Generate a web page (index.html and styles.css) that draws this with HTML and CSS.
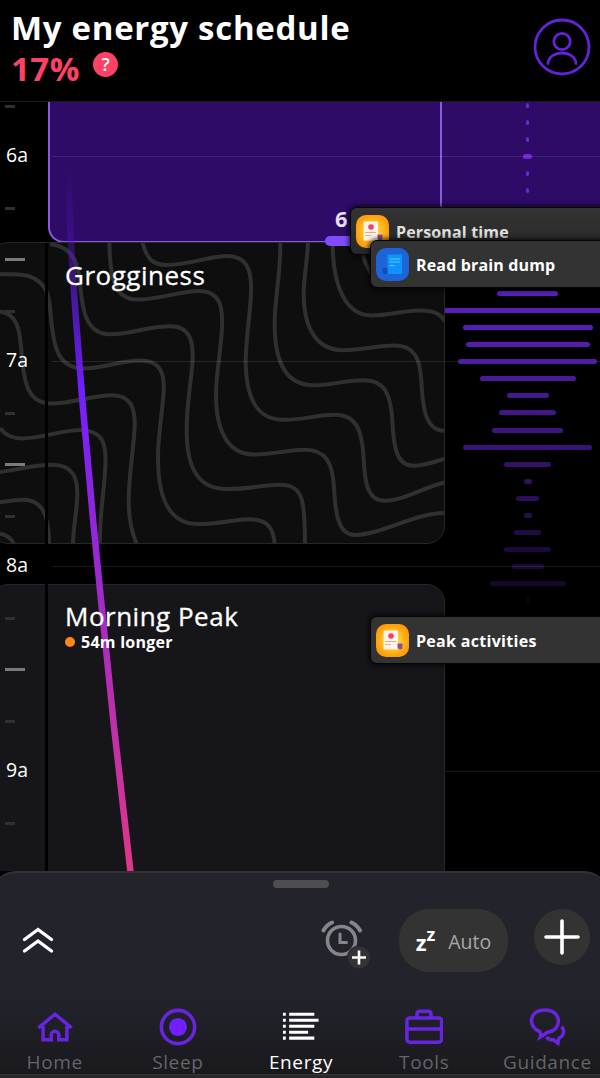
FILE: index.html
```
<!DOCTYPE html>
<html lang="en">
<head>
  <meta charset="utf-8">
  <title>My energy schedule</title>
  <link rel="stylesheet" href="styles.css">
</head>
<body>
  <header class="header">
    <div>
      <h1 class="title">My energy schedule</h1>
      <div class="energy">
        <span class="percent">17%</span>
        <span class="help">?</span>
      </div>
    </div>
    <svg class="profile" width="58" height="58" viewBox="0 0 58 58">
      <circle cx="29" cy="29" r="27"/>
      <circle cx="29" cy="23.5" r="8.2"/>
      <path d="M15 45.5C16 31.500 42 31.500 43 45.500"/>
    </svg>
  </header>

  <main class="schedule">
    <div class="blocks">
      <div class="block-sleep"><span class="wake-time">6</span><i class="wake-handle"></i></div>
      <div class="block block-groggy">
        <svg class="waves" viewBox="0 36 1335 904" preserveAspectRatio="none">
          <path d="M150 40C200 45 232 75 238 140C246 220 250 310 330 310C400 310 440 286 510 286C570 286 582 330 577 400C570 480 560 520 560 600C560 720 600 775 680 775C750 775 790 762 840 762C910 762 915 810 915 940"/>
          <path d="M0 130H40C110 130 145 160 150 230C158 330 165 413 250 413C310 413 360 389 420 389C480 389 494 425 491 480C488 540 474 610 474 680C474 810 510 880 595 880C660 880 700 866 750 866C800 866 820 890 824 940"/>
          <path d="M0 242C50 250 60 290 65 370C72 460 85 518 155 518C215 518 280 493 335 493C395 493 406 535 404 590C400 660 386 740 386 810C386 870 395 905 410 940"/>
          <path d="M0 592C15 612 35 623 65 623C130 623 180 598 240 598C310 598 320 640 316 710C312 790 298 850 300 940"/>
          <path d="M0 724C60 716 100 702 155 702C220 702 236 740 231 810C228 860 220 890 219 940"/>
          <path d="M0 815C25 811 45 807 70 807C125 807 147 850 147 940"/>
          <path d="M0 908C20 913 34 922 42 940"/>
          <path d="M328 36C330 130 340 206 410 206C480 206 540 180 595 180C660 180 669 225 666 290C662 370 647 430 648 500C650 610 690 671 760 671C830 671 860 657 915 657C980 657 998 700 1002 770C1006 850 1015 913 1065 913C1140 913 1250 845 1335 847"/>
          <path d="M428 36C440 80 455 102 500 102C570 102 630 75 680 75C740 75 756 115 753 185C750 265 736 330 737 400C740 510 775 567 850 567C915 567 950 552 1005 552C1070 552 1085 600 1090 670C1094 740 1095 810 1155 810C1210 810 1270 770 1335 755"/>
          <path d="M841 36C842 130 824 200 824 280C824 400 860 463 940 463C1000 463 1035 448 1090 448C1155 448 1172 490 1177 570C1181 650 1190 705 1240 705C1275 705 1300 693 1335 684"/>
          <path d="M924 36C922 90 911 140 911 190C912 300 955 358 1030 358C1090 358 1130 344 1185 344C1245 344 1260 385 1264 450C1268 530 1275 600 1335 600"/>
          <path d="M998 36C998 150 1030 254 1115 254C1170 254 1205 239 1260 239C1300 239 1322 248 1335 272"/>
          <path d="M1082 36C1088 80 1100 120 1130 145"/>
        </svg>
      </div>
      <div class="block block-peak"></div>
    </div>

    <div class="noise" id="noise"></div>
    <div class="hour-lines"><i></i><i></i><i></i><i></i></div>

    <svg class="curve" viewBox="0 101 445 770">
      <defs>
        <linearGradient id="energyLine" gradientUnits="userSpaceOnUse" x1="0" y1="160" x2="0" y2="871">
          <stop offset="0" stop-color="#5512c0" stop-opacity="0"/>
          <stop offset=".1" stop-color="#5512c0" stop-opacity=".35"/>
          <stop offset=".19" stop-color="#5a1cd0" stop-opacity=".7"/>
          <stop offset=".32" stop-color="#721fff"/>
          <stop offset=".56" stop-color="#9929d2"/>
          <stop offset=".76" stop-color="#b92fae"/>
          <stop offset="1" stop-color="#e0368c"/>
        </linearGradient>
      </defs>
      <path d="M68.500 160C69 220 71 255 75.500 313C78 345 80 370 82 397C84.500 428 91 500 97 560C103 620 111 700 114 727L130.500 872" stroke="url(#energyLine)"/>
    </svg>

    <div class="axis">
      <div><i></i></div>
      <div class="hour">6a</div>
      <div><i></i></div>
      <div><i class="half"></i></div>
      <div><i></i></div>
      <div class="hour">7a</div>
      <div><i></i></div>
      <div><i class="half"></i></div>
      <div><i></i></div>
      <div class="hour">8a</div>
      <div><i></i></div>
      <div><i class="half"></i></div>
      <div><i></i></div>
      <div class="hour">9a</div>
      <div><i></i></div>
    </div>

    <div class="labels">
      <h2 class="groggy-label">Grogginess</h2>
      <h2 class="peak-label">Morning Peak</h2>
      <p class="longer">54m longer</p>
    </div>

    <div class="event event-personal">
      <svg width="33" height="33" viewBox="0 0 33 33">
        <defs><radialGradient id="amber"><stop offset=".4" stop-color="#ffce2e"/><stop offset="1" stop-color="#ff9d0a"/></radialGradient></defs>
        <rect width="33" height="33" rx="10" fill="url(#amber)"/>
        <path d="M7.500 6.500h14.500v13h4v3q0 3-3 3H7.500z" fill="#fff4e6"/>
        <circle cx="15" cy="12" r="2.800" fill="#ef3f6b"/>
        <path d="M9 17.500h11M9 20.500h6" stroke="#f2a58d" stroke-width="1"/>
        <path d="M21.500 19.500h5v3q0 3-2.500 3t-2.500-3z" fill="#8d4b91"/>
      </svg>
      <span>Personal time</span>
    </div>
    <div class="event event-dump">
      <svg width="33" height="33" viewBox="0 0 33 33">
        <rect width="33" height="33" rx="10" fill="#1d64d8"/>
        <path d="M11.500 6.500H26V26H11.500z" fill="#0c94fb"/>
        <path d="M6.500 20h5v6h-2q-3 0-3-3z" fill="#174fae"/>
        <path d="M13.500 11H24M13.500 14H24M13.500 17.500h5" stroke="#61c4ff" stroke-width="1"/>
      </svg>
      <span>Read brain dump</span>
    </div>
    <div class="event event-peak">
      <svg width="33" height="33" viewBox="0 0 33 33">
        <rect width="33" height="33" rx="10" fill="url(#amber)"/>
        <path d="M7.500 6.500h14.500v13h4v3q0 3-3 3H7.500z" fill="#fff4e6"/>
        <circle cx="15" cy="12" r="2.800" fill="#ef3f6b"/>
        <path d="M9 17.500h11M9 20.500h6" stroke="#f2a58d" stroke-width="1"/>
        <path d="M21.500 19.500h5v3q0 3-2.500 3t-2.500-3z" fill="#8d4b91"/>
      </svg>
      <span>Peak activities</span>
    </div>
  </main>

  <footer class="sheet">
    <div class="grabber"></div>
    <div class="actions">
      <svg class="expand" width="32" height="28" viewBox="0 0 32 28">
        <path d="M2.500 13.500L16 3.500L29.500 13.500M2.500 25L16 15L29.500 25"/>
      </svg>
      <svg class="alarm" width="50" height="52" viewBox="0 0 50 52">
        <g fill="none" stroke="#85858a" stroke-width="3.600" stroke-linecap="round">
          <circle cx="20.500" cy="21.500" r="14"/>
          <path d="M19 15v8.500h6.500" stroke-width="3"/>
          <path d="M2.500 11.500Q5.500 6 11 3.500M30.500 3.500Q36 6 39 11.500" stroke-width="4"/>
        </g>
        <circle cx="38" cy="38.500" r="11.500" fill="#333" stroke="#23232c"/>
        <path d="M31 38.500h14M38 31.500v14" stroke="#fff" stroke-width="2.600"/>
      </svg>
      <button class="auto"><b>z<sup>z</sup></b>Auto</button>
      <button class="add">
        <svg width="36" height="36" viewBox="0 0 36 36"><path d="M2 18h32M18 2v32" stroke="#fff" stroke-width="3.600" stroke-linecap="round"/></svg>
      </button>
    </div>

    <nav class="tabs">
      <a>
        <svg viewBox="0 0 40 40">
          <path d="M2.500 21L20 6.500L37.500 21M7.500 19v14.500H16v-5a4 4 0 0 1 8 0v5h8.500V19"/>
        </svg>
        <span>Home</span>
      </a>
      <a>
        <svg viewBox="0 0 40 40">
          <circle cx="20" cy="20" r="17.500"/><circle cx="20" cy="20" r="9.500" fill="#721fff" stroke="none"/>
        </svg>
        <span>Sleep</span>
      </a>
      <a class="active">
        <svg viewBox="0 0 40 40">
          <path d="M1 6.600h3M7.500 6.600H34M1 12.800h3M7.500 12.800H38.500M1 19.200h3M7.500 19.200H34M1 25.500h3M7.500 25.500H27.500M1 31.700h3M7.500 31.700H34"/>
        </svg>
        <span>Energy</span>
      </a>
      <a>
        <svg viewBox="0 0 40 40">
          <rect x="2" y="10.500" width="36.500" height="25.500" rx="3"/>
          <path d="M2 22H38M12.500 10V7q0-3.500 3.500-3.500h8Q27.500 3.500 27.500 7v3"/>
        </svg>
        <span>Tools</span>
      </a>
      <a>
        <svg viewBox="0 0 40 40">
          <path d="M12.500 25C-.5 20.500.5 2 18 2C36 2 36.500 24 20.500 25.500Q17.500 28 13 30.500Q14 28 12.500 25z"/>
          <path d="M35.500 19.500Q40.500 27 32.500 32L31.500 37L27 33.500Q22 34 19.500 30.500"/>
        </svg>
        <span>Guidance</span>
      </a>
    </nav>
    <div class="next-sheet"></div>
  </footer>

  <script>
    // [width, opacity] of each noise bar, one every five minutes
    const levels = [
      [3, 1], [3, 1], [3, 1], [9, 1], [3, 1], [3, 1], [2, .4], [2, 0], [2, 0], [2, 0], [2, 0],
      [61, .82], [180, .82], [130, .8], [124, .76], [139, .72], [96, .68], [42, .64], [57, .6],
      [71, .56], [129, .52], [47, .47], [8, .43], [23, .39], [8, .35], [27, .31], [47, .27],
      [32, .24], [76, .2], [2, .15]
    ];
    const noise = document.getElementById("noise");
    levels.forEach(([width, opacity]) => {
      const row = document.createElement("div");
      const bar = document.createElement("i");
      bar.style.width = width + "px";
      bar.style.opacity = opacity;
      row.appendChild(bar);
      noise.appendChild(row);
    });
  </script>
</body>
</html>
```
FILE: styles.css
```
* {
  margin: 0;
  padding: 0;
  box-sizing: border-box;
}

body {
  width: 600px;
  height: 1078px;
  overflow: hidden;
  background: #000;
  color: #fff;
  font-family: "Open Sans", "Noto Sans", sans-serif;
  display: flex;
  flex-direction: column;
}

svg {
  display: block;
  flex-shrink: 0;
}

.header {
  height: 102px;
  padding: 8px 9px 0 11px;
  border-bottom: 1px solid #1b1b1b;
  display: flex;
  justify-content: space-between;
  flex-shrink: 0;
}

.title {
  font-size: 33px;
  line-height: 40px;
  font-weight: 700;
  letter-spacing: 0.7px;
  white-space: nowrap;
}

.energy {
  display: flex;
  gap: 13px;
  color: #ff4067;
}

.percent {
  font-size: 33px;
  line-height: 41px;
  font-weight: 700;
  letter-spacing: 0.5px;
}

.help {
  width: 25px;
  height: 25px;
  margin-top: 4px;
  border-radius: 50%;
  background: #ff4067;
  color: #fff;
  font-size: 18px;
  line-height: 25px;
  font-weight: 600;
  text-align: center;
}

.profile {
  margin-top: 10px;
  fill: none;
  stroke: #6423d8;
  stroke-width: 2.8;
  stroke-linecap: round;
}

/* everything in the timeline shares one grid row and overlaps */
.schedule {
  position: relative;
  height: 769px;
  flex-shrink: 0;
  display: grid;
  grid-template-columns: 48px 397px 155px;
  grid-template-rows: 769px;
  overflow: hidden;
}

.blocks {
  grid-area: 1 / 1 / 2 / 3;
  background: linear-gradient(#2d0b66, #2d0b66) right top / 10px 110px no-repeat;
  display: flex;
  flex-direction: column;
}

.block-sleep {
  height: 141px;
  margin: 0 3px 0 48px;
  background: #2d0b66;
  border: 2px solid #865bdf;
  border-top: 0;
  border-radius: 0 0 16px 16px;
  flex-shrink: 0;
  display: flex;
  flex-direction: column;
  align-items: flex-start;
  justify-content: flex-end;
}

.wake-time {
  margin-left: 285px;
  font-size: 22px;
  line-height: 28px;
  font-weight: 700;
  color: #e9def9;
}

.wake-handle {
  width: 80px;
  height: 10px;
  margin: 4px 0 -5px 275px;
  border-radius: 5px;
  background: #7f4dff;
  z-index: 1;
}

.block {
  margin-left: -10px;
  border: 1px solid #272729;
  border-radius: 18px;
  overflow: hidden;
  flex-shrink: 0;
}

.block-groggy {
  height: 302px;
  margin-top: -1px;
  background: #0e0e0e;
}

.waves {
  width: 445px;
  height: 301px;
  margin-left: 9px;
  fill: none;
  stroke: #303030;
  stroke-width: 12;
}

.block-peak {
  height: 310px;
  margin-top: 40px;
  background: #16161a;
}

.noise {
  grid-area: 1 / 3 / 2 / 4;
  padding: 0 0 0 10px;
  background: linear-gradient(#2d0b66 140px, #000 140px);
  overflow: hidden;
}

.noise::before {
  content: "";
  display: block;
  margin-top: -5px;
}

.noise div {
  height: 17.08px;
  display: flex;
  align-items: center;
  justify-content: center;
}

.noise i {
  height: 5px;
  flex-shrink: 0;
  border-radius: 3px;
  background: #6d25e0;
}

.hour-lines {
  grid-area: 1 / 2 / 2 / 4;
  display: flex;
  flex-direction: column;
  gap: 203.5px;
  padding: 53.5px 0 0 4px;
}

.hour-lines i {
  height: 1.5px;
  background: rgba(255, 255, 255, 0.1);
  flex-shrink: 0;
}

.hour-lines i:last-child {
  margin-left: 393px;
}

.curve {
  grid-area: 1 / 1 / 2 / 3;
  width: 445px;
  height: 770px;
  margin-top: -1px;
  fill: none;
  stroke-width: 6.5;
  z-index: 1;
}

.axis {
  grid-area: 1 / 1 / 2 / 2;
  margin-top: -21.5px;
  padding-left: 5px;
  z-index: 1;
  background: linear-gradient(#000, #000) 45px 162px / 3px 100% no-repeat;
}

.axis div {
  height: 51.25px;
  display: flex;
  align-items: center;
}

.axis i {
  width: 10px;
  height: 3px;
  background: #303030;
}

.axis i.half {
  width: 20px;
  background: #7b7b7d;
}

.axis .hour {
  font-size: 19.5px;
  padding: 0 0 5px 1px;
}

.labels {
  grid-area: 1 / 2 / 2 / 3;
  padding: 156px 0 0 17px;
  z-index: 2;
}

.labels h2 {
  font-size: 26px;
  line-height: 34px;
  font-weight: 500;
  -webkit-text-stroke: 0.3px #fff;
}

.groggy-label {
  letter-spacing: 0.5px;
}

.labels .peak-label {
  margin-top: 309px;
  line-height: 30px;
  letter-spacing: 0.5px;
}

.longer {
  margin-top: 2px;
  font-size: 16px;
  line-height: 18px;
  font-weight: 700;
  letter-spacing: 0.25px;
  display: flex;
  align-items: center;
  gap: 6px;
}

.longer::before {
  content: "";
  width: 10px;
  height: 10px;
  border-radius: 50%;
  background: #ff8514;
}

.event {
  position: absolute;
  left: 370px;
  right: -12px;
  height: 48px;
  padding-left: 5px;
  border: 1px solid #050505;
  border-radius: 7px;
  background: #333;
  box-shadow: 0 0 4px 2px rgba(0, 0, 0, 0.6);
  display: flex;
  align-items: center;
  gap: 6px;
  font-size: 16px;
  font-weight: 700;
  letter-spacing: 0.15px;
  z-index: 3;
}

.event span {
  padding: 2px 0 0 1px;
}

.event-personal {
  top: 105px;
  left: 350px;
  background: linear-gradient(#333, #282828);
  color: #e0e0e0;
}

.event-dump {
  top: 138px;
}

.event-peak {
  top: 514px;
}

.event-peak span {
  letter-spacing: 0.3px;
}

.sheet {
  height: 207px;
  margin: 0 -8px;
  padding: 0 8px;
  border-top: 2px solid #323236;
  border-radius: 24px 24px 0 0;
  background: #23232c;
  display: flex;
  flex-direction: column;
  z-index: 4;
  flex-shrink: 0;
}

.grabber {
  width: 56px;
  height: 8px;
  margin: 7px 0 0 273px;
  border-radius: 4px;
  background: #4e4e50;
  flex-shrink: 0;
}

.actions {
  height: 108px;
  padding: 21px 10px 0 22px;
  display: flex;
  align-items: flex-start;
  flex-shrink: 0;
}

.expand {
  margin-top: 17px;
  fill: none;
  stroke: #fff;
  stroke-width: 3.4;
  stroke-linecap: round;
}

.alarm {
  margin: 10px 28px 0 auto;
}

.auto {
  width: 109px;
  height: 63px;
  padding-top: 2px;
  border: 0;
  border-radius: 30px;
  background: #333;
  color: #a8a8a8;
  font-family: inherit;
  font-size: 19.5px;
  display: flex;
  align-items: center;
  justify-content: center;
  gap: 13px;
}

.auto b {
  font-size: 22px;
  line-height: 28px;
  color: #fff;
}

.auto sup {
  font-size: 18px;
  line-height: 0;
  vertical-align: 10px;
}

.add {
  width: 56px;
  height: 56px;
  margin-left: 26px;
  border: 0;
  border-radius: 50%;
  background: #333;
  display: flex;
  align-items: center;
  justify-content: center;
}

.tabs {
  height: 84px;
  margin: 0 -9px 0 -7px;
  padding-top: 12px;
  background: linear-gradient(#23232c, #18181c);
  display: flex;
  flex-shrink: 0;
}

.tabs a {
  flex: 1;
  display: flex;
  flex-direction: column;
  align-items: center;
  gap: 2px;
  color: #65656a;
  font-size: 19px;
  line-height: 28px;
  letter-spacing: 0.6px;
}

.tabs svg {
  width: 38px;
  height: 38px;
  fill: none;
  stroke: #6824df;
  stroke-width: 3.7;
}

.tabs .active {
  color: #fff;
}

.tabs .active svg {
  stroke: #fff;
  stroke-width: 3.2;
}

.next-sheet {
  height: 6px;
  margin: -6px -8px 0;
  border-top: 1px solid #38383a;
  border-radius: 14px 14px 0 0;
  background: #28282a;
}
```
